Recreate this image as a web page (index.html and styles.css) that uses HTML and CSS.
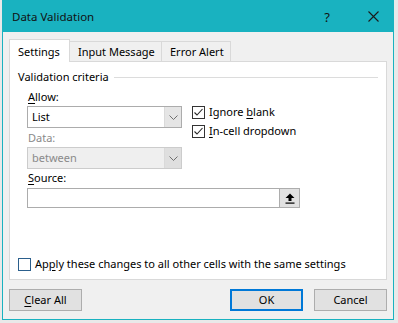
FILE: index.html
```html
<!DOCTYPE html>
<html lang="en">
<head>
    <meta charset="UTF-8">
    <title>Data Validation</title>
    <link rel="stylesheet" href="styles.css">
</head>
<body>
    <div class="window">
        <div class="titlebar">
            <span class="title">Data Validation</span>
            <span class="help">?</span>
            <span class="close">
                <svg width="11" height="11" viewBox="0 0 11 11"><path d="M0.5 0.5 L10.5 10.5 M10.5 0.5 L0.5 10.5" stroke="#1b1b1b" stroke-width="1.1" fill="none"/></svg>
            </span>
        </div>

        <div class="dialog-body">
            <div class="tabs">
                <div class="tab active">Settings</div>
                <div class="tab tab-input">Input Message</div>
                <div class="tab tab-error">Error Alert</div>
            </div>

            <div class="panel">
                <div class="group-head">
                    <span>Validation criteria</span>
                    <span class="rule"></span>
                </div>

                <div class="criteria">
                    <div class="left-col">
                        <div class="field-label"><u>A</u>llow:</div>
                        <div class="combo">
                            <span class="combo-text">List</span>
                            <span class="combo-btn">
                                <svg width="9" height="5" viewBox="0 0 9 5"><path d="M0.5 0.5 L4.5 4.5 L8.5 0.5" stroke="#6f6f6f" fill="none"/></svg>
                            </span>
                        </div>
                        <div class="field-label disabled-text">Data:</div>
                        <div class="combo disabled">
                            <span class="combo-text">between</span>
                            <span class="combo-btn">
                                <svg width="9" height="5" viewBox="0 0 9 5"><path d="M0.5 0.5 L4.5 4.5 L8.5 0.5" stroke="#6f6f6f" fill="none"/></svg>
                            </span>
                        </div>
                    </div>

                    <div class="checks">
                        <div class="check-row">
                            <span class="box checked">
                                <svg width="11" height="11" viewBox="0 0 11 11"><path d="M1.5 5.5 L4 8 L9.5 2" stroke="#262626" stroke-width="1.1" fill="none"/></svg>
                            </span>
                            <span>Ignore <u>b</u>lank</span>
                        </div>
                        <div class="check-row">
                            <span class="box checked">
                                <svg width="11" height="11" viewBox="0 0 11 11"><path d="M1.5 5.5 L4 8 L9.5 2" stroke="#262626" stroke-width="1.1" fill="none"/></svg>
                            </span>
                            <span><u>I</u>n-cell dropdown</span>
                        </div>
                    </div>
                </div>

                <div class="field-label source-label"><u>S</u>ource:</div>
                <div class="source">
                    <span class="source-input"></span>
                    <span class="source-btn">
                        <svg width="10" height="11" viewBox="0 0 10 11"><path d="M5 0.5 L9.5 5 L6.5 5 L6.5 8 L3.5 8 L3.5 5 L0.5 5 Z" fill="#000"/><rect x="0.5" y="9.5" width="9" height="1.2" fill="#000"/></svg>
                    </span>
                </div>

                <div class="check-row apply">
                    <span class="box apply-box"></span>
                    <span>Ap<u>p</u>ly these changes to all other cells with the same settings</span>
                </div>
            </div>

            <div class="buttons">
                <div class="btn"><u>C</u>lear All</div>
                <div class="spacer"></div>
                <div class="btn default">OK</div>
                <div class="btn">Cancel</div>
            </div>
        </div>
    </div>
</body>
</html>
```

FILE: styles.css
```css
body {
    margin: 0;
    background-color: #e9e9e9;
    font-family: "Noto Sans", "Open Sans", sans-serif;
    font-size: 11px;
    color: #000;
}
u {
    text-decoration: underline;
    text-underline-offset: 2px;
}
.window {
    margin-left: 2px;
    width: 390px;
    height: 318px;
    border: 1px solid #19b2c0;
    background-color: #f0f0f0;
}
.titlebar {
    display: flex;
    align-items: center;
    height: 31px;
    background-color: #19b2c0;
    color: #111;
}
.title {
    margin-left: 9px;
    flex-grow: 1;
    font-size: 11.5px;
}
.help {
    font-size: 13px;
    margin-right: 38px;
}
.close {
    display: flex;
    margin-right: 14px;
}
.dialog-body {
    padding: 7px 6px 0 6px;
}
.tabs {
    display: flex;
    align-items: flex-end;
    height: 22px;
}
.tab {
    box-sizing: border-box;
    height: 20px;
    line-height: 19px;
    border: 1px solid #d9d9d9;
    border-bottom: none;
    padding-left: 8px;
    background-color: #f0f0f0;
    white-space: nowrap;
}
.tab.active {
    width: 61px;
    height: 23px;
    line-height: 24px;
    margin-bottom: -1px;
    background-color: #fff;
    position: relative;
    z-index: 1;
}
.tab-input {
    width: 92px;
    border-left: none;
}
.tab-error {
    width: 69px;
    border-left: none;
}
.panel {
    box-sizing: border-box;
    height: 219px;
    background-color: #fff;
    border: 1px solid #d9d9d9;
    padding: 8px 8px 0 8px;
}
.group-head {
    display: flex;
    align-items: center;
    height: 14px;
    line-height: 14px;
}
.group-head .rule {
    flex-grow: 1;
    height: 1px;
    background-color: #dcdcdc;
    margin-left: 5px;
}
.criteria {
    display: flex;
    gap: 10px;
    margin-left: 9px;
}
.left-col {
    width: 155px;
}
.field-label {
    height: 14px;
    line-height: 14px;
    padding-left: 1px;
    margin-top: 6px;
}
.left-col .field-label + .combo {
    margin-top: 2px;
}
.left-col .disabled-text {
    margin-top: 3px;
}
.disabled-text {
    color: #8a8a8a;
}
.combo {
    box-sizing: border-box;
    display: flex;
    height: 22px;
    border: 1px solid #acacac;
    background-color: #fff;
}
.combo-text {
    flex-grow: 1;
    line-height: 20px;
    padding-left: 4px;
}
.combo-btn {
    width: 16px;
    display: flex;
    align-items: center;
    justify-content: center;
    background-color: #e5e5e5;
    border-left: 1px solid #dadada;
}
.combo.disabled {
    border-color: #cccccc;
    background-color: #efefef;
}
.combo.disabled .combo-text {
    color: #8a8a8a;
}
.combo.disabled .combo-btn {
    background-color: #dfdfdf;
}
.checks {
    display: flex;
    flex-direction: column;
    gap: 5px;
    margin-top: 21px;
}
.check-row {
    display: flex;
    align-items: center;
    height: 14px;
    line-height: 14px;
    gap: 4px;
}
.box {
    box-sizing: border-box;
    width: 13px;
    height: 13px;
    border: 1px solid #333;
    background-color: #fff;
    display: flex;
    align-items: center;
    justify-content: center;
}
.source-label {
    margin-left: 9px;
    margin-top: 2px;
}
.source {
    display: flex;
    margin-left: 9px;
    margin-top: 3px;
    width: 273px;
    height: 20px;
}
.source-input {
    box-sizing: border-box;
    flex-grow: 1;
    border: 1px solid #acacac;
    border-right: none;
}
.source-btn {
    box-sizing: border-box;
    width: 21px;
    display: flex;
    align-items: center;
    justify-content: center;
    background-color: #e1e1e1;
    border: 1px solid #adadad;
}
.apply {
    margin-top: 49px;
    margin-left: 0;
}
.apply-box {
    border-color: #2b5f8c;
}
.buttons {
    display: flex;
    gap: 11px;
    margin-top: 9px;
}
.spacer {
    flex-grow: 1;
}
.btn {
    box-sizing: border-box;
    width: 73px;
    height: 22px;
    line-height: 20px;
    text-align: center;
    background-color: #e1e1e1;
    border: 1px solid #adadad;
}
.btn.default {
    border: 2px solid #0078d7;
    line-height: 18px;
}
```
